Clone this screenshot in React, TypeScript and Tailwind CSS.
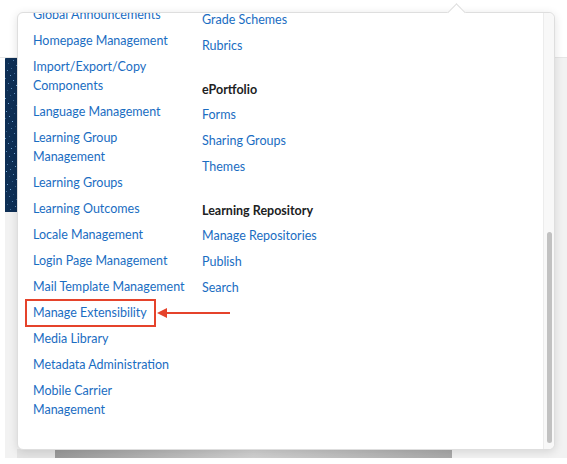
import React from "react";

const leftLinks: string[] = [
  "Global Announcements",
  "Homepage Management",
  "Import/Export/Copy\nComponents",
  "Language Management",
  "Learning Group\nManagement",
  "Learning Groups",
  "Learning Outcomes",
  "Locale Management",
  "Login Page Management",
  "Mail Template Management",
  "Manage Extensibility",
  "Media Library",
  "Metadata Administration",
  "Mobile Carrier\nManagement",
];

const rightSections: { title?: string; links: string[] }[] = [
  { links: ["Grade Schemes", "Rubrics"] },
  { title: "ePortfolio", links: ["Forms", "Sharing Groups", "Themes"] },
  { title: "Learning Repository", links: ["Manage Repositories", "Publish", "Search"] },
];

function Starfield() {
  // dark blue photo strip behind the popup
  const dots = Array.from({ length: 60 }, (_, i) => ({
    x: (i * 37) % 12,
    y: (i * 53) % 154,
    o: 0.3 + ((i * 7) % 10) / 14,
  }));
  return (
    <svg width="12" height="154" className="block">
      <rect width="12" height="154" fill="#0e2f55" />
      {dots.map((d, i) => (
        <rect key={i} x={d.x} y={d.y} width="1" height="1" fill="#7fb6e6" opacity={d.o} />
      ))}
    </svg>
  );
}

function Link({ label, highlight }: { label: string; highlight?: boolean }) {
  if (!highlight) {
    return <li className="text-[#1a6dc2] whitespace-pre-line">{label}</li>;
  }
  return (
    <li className="text-[#1a6dc2]">
      <span className="relative inline-block">
        {label}
        {/* annotation box + arrow */}
        <span className="absolute -left-[8px] -right-[9px] -top-[4px] -bottom-[5px] border-2 border-[#e5432b]" />
        <svg
          className="absolute top-1/2 -translate-y-1/2 left-[calc(100%+10px)]"
          width="73"
          height="12"
          viewBox="0 0 73 12"
        >
          <path d="M0 6 L10 1 L10 11 Z" fill="#e5432b" />
          <line x1="8" y1="6" x2="73" y2="6" stroke="#e5432b" strokeWidth="2" />
        </svg>
      </span>
    </li>
  );
}

export default function App() {
  return (
    <div
      className="relative w-[567px] h-[464px] overflow-hidden bg-white"
      style={{ fontFamily: "Lato, 'Noto Sans', sans-serif" }}
    >
      {/* page behind the popup */}
      <div className="flex flex-col h-full">
        <div className="h-[58px] border-b border-[#e6e6e6] bg-white" />
        <div className="flex h-[400px] ml-[5px] bg-[#f2f2f2]">
          <div className="flex flex-col w-[12px]">
            <Starfield />
          </div>
          <div className="flex-1 flex flex-col justify-end">
            <div className="h-[9px] flex">
              <div className="w-[38px] bg-[#e4e4e4]" />
              <div className="w-[397px] bg-gradient-to-r from-[#9a9a9a] via-[#d0d0d0] to-[#a9a9a9]" />
            </div>
          </div>
        </div>
        <div className="flex-1 bg-white" />
      </div>

      {/* popup menu */}
      <div className="absolute left-[17px] top-[12px] w-[538px] h-[438px] rounded-[6px] border border-[#dedede] bg-white shadow-[0_2px_10px_rgba(0,0,0,0.12)]">
        <div className="absolute -top-[7px] left-[432px] w-[13px] h-[13px] rotate-45 bg-white border-l border-t border-[#dedede]" />
        <div className="relative flex h-full overflow-hidden rounded-[6px]">
          <div className="flex-1 overflow-hidden">
            <div className="grid grid-cols-[160px_1fr] gap-x-[9px] pl-[15px] -mt-[8px] text-[12.5px] leading-[19px] whitespace-nowrap">
              <ul className="flex flex-col gap-[7px]">
                {leftLinks.map((l) => (
                  <Link key={l} label={l} highlight={l === "Manage Extensibility"} />
                ))}
              </ul>
              <div className="flex flex-col gap-[25px] pt-[5px]">
                {rightSections.map((s, i) => (
                  <div key={i} className="flex flex-col gap-[6px]">
                    {s.title && <h3 className="font-bold text-[#202122]">{s.title}</h3>}
                    <ul className="flex flex-col gap-[7px]">
                      {s.links.map((l) => (
                        <Link key={l} label={l} />
                      ))}
                    </ul>
                  </div>
                ))}
              </div>
            </div>
          </div>
          {/* scrollbar */}
          <div className="w-[11px] border-l border-[#ececec] bg-[#f8f8f8] flex flex-col pt-[219px] pb-[6px] items-center">
            <div className="w-[5px] flex-1 rounded-full bg-[#c1c1c1]" />
          </div>
        </div>
      </div>
    </div>
  );
}
